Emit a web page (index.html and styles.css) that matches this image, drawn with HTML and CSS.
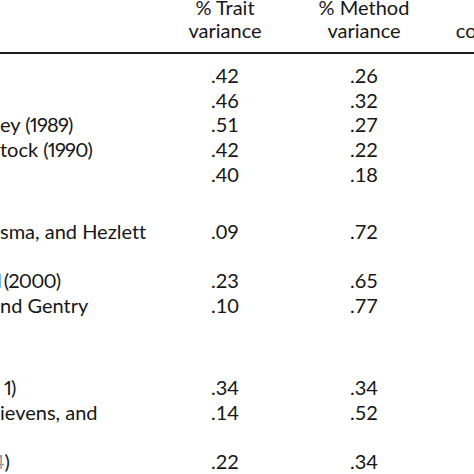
FILE: index.html
```html
<!DOCTYPE html>
<html>
<head>
<meta charset="utf-8">
<link rel="stylesheet" href="styles.css">
</head>
<body>
<div class="table">
  <div class="head">
    <div class="cell study"></div>
    <div class="cell num">% Trait<br>variance</div>
    <div class="cell num">% Method<br>variance</div>
    <div class="cell num">Mean<br>correlation</div>
  </div>
  <div class="body">
    <div class="row"><div class="cell study"></div><div class="cell num">.42</div><div class="cell num">.26</div><div class="cell num"></div></div>
    <div class="row"><div class="cell study"></div><div class="cell num">.46</div><div class="cell num">.32</div><div class="cell num"></div></div>
    <div class="row"><div class="cell study">ey <span class="yr">(1989)</span></div><div class="cell num">.51</div><div class="cell num">.27</div><div class="cell num"></div></div>
    <div class="row"><div class="cell study">tock <span class="yr">(1990)</span></div><div class="cell num">.42</div><div class="cell num">.22</div><div class="cell num"></div></div>
    <div class="row"><div class="cell study"></div><div class="cell num">.40</div><div class="cell num">.18</div><div class="cell num"></div></div>
    <div class="row group"><div class="cell study"></div><div class="cell num"></div><div class="cell num"></div><div class="cell num"></div></div>
    <div class="row after-group"><div class="cell study">sma, and Hezlett<br>&nbsp;</div><div class="cell num">.09</div><div class="cell num">.72</div><div class="cell num"></div></div>
    <div class="row"><div class="cell study"><span class="cut sliver">l</span><span class="yr">(2000)</span></div><div class="cell num">.23</div><div class="cell num">.65</div><div class="cell num"></div></div>
    <div class="row"><div class="cell study">nd Gentry<br>&nbsp;</div><div class="cell num">.10</div><div class="cell num">.77</div><div class="cell num"></div></div>
    <div class="row group"><div class="cell study"><span class="cut faint">t</span></div><div class="cell num"></div><div class="cell num"></div><div class="cell num"></div></div>
    <div class="row after-group"><div class="cell study indent"><span class="yr">1)</span></div><div class="cell num">.34</div><div class="cell num">.34</div><div class="cell num"></div></div>
    <div class="row"><div class="cell study">ievens, and<br>&nbsp;</div><div class="cell num">.14</div><div class="cell num">.52</div><div class="cell num"></div></div>
    <div class="row"><div class="cell study"><span class="cut faint">4</span>)</div><div class="cell num">.22</div><div class="cell num">.34</div><div class="cell num"></div></div>
  </div>
</div>
</body>
</html>
```

FILE: styles.css
```css
html, body {
  margin: 0;
  padding: 0;
  background: #ffffff;
  overflow: hidden;
  width: 474px;
  height: 474px;
}

.table {
  width: 568px;
  font-family: "Lato", "Liberation Sans", sans-serif;
  font-size: 20px;
  color: #161616;
  font-variant-ligatures: none;
}

.head,
.row {
  display: grid;
  grid-template-columns: 160px 130px 148px 130px;
}

.head {
  margin-top: -4.2px;
  line-height: 23px;
  padding-bottom: 10.2px;
  border-bottom: 2px solid #1e1e1e;
}

.body {
  padding-top: 8.9px;
  line-height: 24.8px;
}

.row {
  min-height: 24.8px;
}

.cell.num {
  text-align: center;
}

.cell.study {
  text-align: left;
  white-space: nowrap;
}

.yr {
  font-variant-numeric: proportional-nums;
  letter-spacing: -0.8px;
}

.row.group {
  padding-top: 4px;
}

.row.after-group {
  padding-top: 3.2px;
}

.cut {
  display: inline-block;
  margin-left: -7px;
}

.cut.sliver {
  margin-left: -3px;
  margin-right: 2px;
}

.faint {
  color: #9a9a9a;
}

.indent {
  padding-left: 4px;
}
```
